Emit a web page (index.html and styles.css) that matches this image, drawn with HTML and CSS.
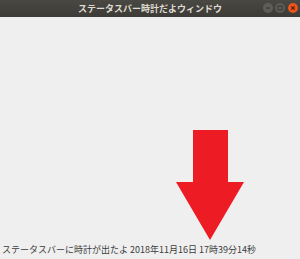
FILE: index.html
```html
<!DOCTYPE html>
<html lang="ja">
<head>
<meta charset="utf-8">
<link rel="stylesheet" href="styles.css">
</head>
<body>
<div class="window">
  <div class="titlebar">
    <span class="title">ステータスバー時計だよウィンドウ</span>
    <div class="controls">
      <span class="btn btn-min"><svg width="10" height="10" viewBox="0 0 10 10"><line x1="3" y1="5" x2="7" y2="5" stroke="#3a3935" stroke-width="1.2"/></svg></span>
      <span class="btn btn-max"><svg width="10" height="10" viewBox="0 0 10 10"><rect x="3" y="3" width="4" height="4" fill="none" stroke="#3a3935" stroke-width="1"/></svg></span>
      <span class="btn btn-close"><svg width="10" height="10" viewBox="0 0 10 10"><path d="M3.3 3.3 L6.7 6.7 M6.7 3.3 L3.3 6.7" stroke="#5a1a08" stroke-width="1.2"/></svg></span>
    </div>
  </div>
  <div class="content">
    <svg class="arrow" width="68" height="110" viewBox="0 0 68 110">
      <polygon points="17,0 52,0 52,52 68,52 34,110 0,52 17,52" fill="#ed1c24"/>
    </svg>
  </div>
  <div class="statusbar">ステータスバーに時計が出たよ 2018年11月16日 17時39分14秒</div>
</div>
</body>
</html>
```
FILE: styles.css
```css
html, body {
  margin: 0;
  padding: 0;
}
body {
  width: 300px;
  height: 259px;
  overflow: hidden;
  background: #efefef;
  font-family: "Noto Sans CJK JP", "Noto Sans", sans-serif;
}
.window {
  display: flex;
  flex-direction: column;
  height: 259px;
}
.titlebar {
  position: relative;
  height: 17px;
  flex: none;
  background: linear-gradient(#4a4843, #3c3b37);
  display: flex;
  align-items: center;
  justify-content: center;
}
.title {
  color: #dfdbd2;
  font-size: 9px;
  font-weight: bold;
  line-height: 17px;
}
.controls {
  position: absolute;
  right: 2px;
  top: 3px;
  display: flex;
  gap: 2px;
}
.btn {
  width: 10px;
  height: 10px;
  border-radius: 50%;
  display: flex;
}
.btn-min, .btn-max {
  background: #5e5d59;
}
.btn-close {
  background: #e9541f;
  margin-left: 1px;
}
.content {
  flex: 1;
  display: flex;
  flex-direction: column;
}
.arrow {
  display: block;
  margin-top: 113px;
  margin-left: 176px;
}
.statusbar {
  flex: none;
  height: 14px;
  line-height: 14px;
  font-size: 9px;
  color: #3c3c3c;
  padding-left: 2px;
  padding-bottom: 2px;
  white-space: nowrap;
}
```
